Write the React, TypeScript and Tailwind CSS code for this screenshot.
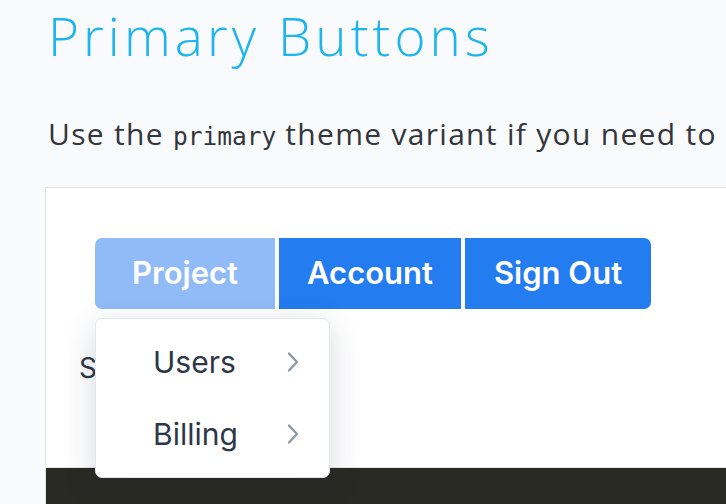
const menuItems = ["Users", "Billing"];

function Chevron() {
  return (
    <svg width="12" height="20" viewBox="0 0 12 20" fill="none" className="text-[#8a94a3]">
      <path d="M2 1.5 L10 10 L2 18.5" stroke="currentColor" strokeWidth="2.2" strokeLinecap="round" strokeLinejoin="round" />
    </svg>
  );
}

function ButtonGroup() {
  return (
    <div className="flex gap-[4px]">
      <button className="h-[71px] w-[180px] rounded-l-[7px] bg-[#90bbf6] text-[31px] font-semibold text-white">
        Project
      </button>
      <button className="h-[71px] w-[182px] bg-[#237cf0] text-[31px] font-semibold text-white">
        Account
      </button>
      <button className="h-[71px] w-[186px] rounded-r-[7px] bg-[#237cf0] text-[31px] font-semibold text-white">
        Sign Out
      </button>
    </div>
  );
}

function Dropdown() {
  return (
    <div className="absolute left-[49px] top-[130px] flex h-[160px] w-[235px] flex-col justify-center rounded-[7px] border border-[#e3e6ea] bg-white shadow-[0_8px_32px_rgba(30,40,60,0.18)]">
      {menuItems.map((label) => (
        <div key={label} className="flex h-[72px] items-center justify-between pl-[57px] pr-[30px]">
          <span className="text-[30px] text-[#2d3748]">{label}</span>
          <Chevron />
        </div>
      ))}
    </div>
  );
}

export default function App() {
  return (
    <div
      className="h-[504px] w-[726px] overflow-hidden bg-[#f9fafc]"
      style={{ fontFamily: "Inter, 'Noto Sans', sans-serif" }}
    >
      <div className="pl-[48px]">
        <h1
          className="pt-[4px] text-[53px] font-light leading-[64px] tracking-[4.1px] text-[#1eb4ee] whitespace-nowrap"
          style={{ fontFamily: "'Open Sans', sans-serif" }}
        >
          Primary Buttons
        </h1>
        <p
          className="mt-[46px] text-[30px] leading-[40px] tracking-[1.3px] text-[#33363b] whitespace-nowrap"
          style={{ fontFamily: "'Open Sans', sans-serif" }}
        >
          Use the{" "}
          <code className="text-[24.5px] tracking-normal" style={{ fontFamily: "'DejaVu Sans Mono', monospace" }}>
            primary
          </code>{" "}
          theme variant if you need to
        </p>
      </div>
      <div className="ml-[45px] mt-[30px] w-[720px] border border-r-0 border-[#e2e3e5] bg-white">
        <div className="relative h-[279px] pl-[49px] pt-[50px]">
          <ButtonGroup />
          <p className="ml-[-16px] mt-[38px] text-[28px] text-[#2d3748]">Selected</p>
          <Dropdown />
        </div>
        <div className="h-[40px] border-t border-[#e2e3e5] bg-[#2a2a24]" />
      </div>
    </div>
  );
}
